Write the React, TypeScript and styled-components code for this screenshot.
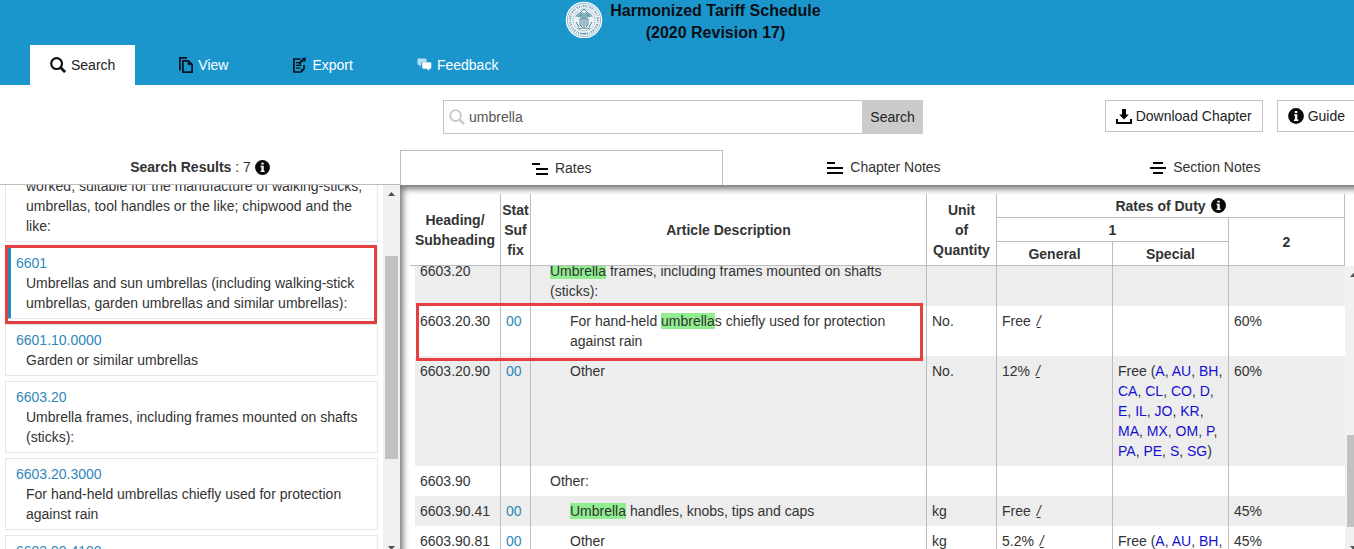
import React, { useLayoutEffect, useRef } from "react";
import styled, { createGlobalStyle, css } from "styled-components";

const BLUE = "#1b96cd";
const RULE = "#bcbcbc";
const LINK = "#2f87bb";
const MARK_RED = "#e43f41";

const GlobalStyle = createGlobalStyle`
  *, *::before, *::after { box-sizing: border-box; }
  html, body, #root { height: 100%; }
  body {
    margin: 0;
    overflow: hidden;
    background: #fff;
    color: #333;
    font-family: "Liberation Sans", Arial, sans-serif;
    font-size: 14px;
    line-height: 20px;
  }
  button, input { font: inherit; }
`;

const Page = styled.div`
  display: flex;
  flex-direction: column;
  width: calc(100% + 12px);
  height: calc(100% + 7px);
`;

const Header = styled.header`
  flex: none;
  background: ${BLUE};
`;

const Brand = styled.div`
  display: flex;
  justify-content: center;
  gap: 7px;
  height: 45px;
  padding: 0 0 0 20px;
`;

const Title = styled.h1`
  margin: 0;
  color: #0b0f14;
  font-size: 16px;
  line-height: 22px;
  text-align: center;
`;

const Nav = styled.nav`
  display: flex;
  gap: 24px;
  padding-left: 30px;
`;

const NavLink = styled.a<{ $active?: boolean }>`
  display: flex;
  align-items: center;
  gap: 5px;
  height: 40px;
  padding: 0 20px;
  color: ${(p) => (p.$active ? "#222" : "#fff")};
  background: ${(p) => (p.$active ? "#fff" : "transparent")};
  text-decoration: none;
`;

const Toolbar = styled.div`
  display: grid;
  grid-template-columns: 1fr auto 1fr;
  flex: none;
  height: 65px;
  padding: 15px 10px 0;
`;

const SearchForm = styled.form`
  display: flex;
  grid-column: 2;
  width: 480px;
  height: 34px;
`;

const SearchField = styled.label`
  display: flex;
  flex: 1;
  align-items: center;
  gap: 4px;
  padding-left: 5px;
  border: 1px solid #c4c4c4;
  border-right: 0;
`;

const SearchInput = styled.input`
  flex: 1;
  min-width: 0;
  padding: 0;
  border: 0;
  outline: 0;
  color: #555;
`;

const SubmitButton = styled.button`
  width: 61px;
  padding: 0;
  border: 0;
  background: #cbcbcb;
  color: #222;
`;

const Actions = styled.div`
  display: flex;
  justify-content: flex-end;
  gap: 14px;
`;

const ActionButton = styled.button`
  display: flex;
  align-items: center;
  gap: 4px;
  height: 32px;
  padding: 0 10px;
  border: 1px solid #c4c4c4;
  background: #fff;
  color: #222;
  white-space: nowrap;
`;

const Columns = styled.div`
  display: flex;
  flex: 1;
  min-height: 0;
`;

const ResultsPanel = styled.aside`
  display: flex;
  flex: none;
  flex-direction: column;
  width: 400px;
`;

const ResultsTitle = styled.h2`
  display: flex;
  flex: none;
  align-items: center;
  justify-content: center;
  gap: 4px;
  height: 35px;
  margin: 0;
  border-bottom: 1px solid ${RULE};
  font-size: 14px;
`;

const Count = styled.span`
  font-weight: normal;
`;

const ScrollArea = styled.div`
  display: flex;
  flex: 1;
  min-height: 0;
`;

const ScrollView = styled.div`
  flex: 1;
  min-width: 0;
  overflow: hidden;
`;

const ResultList = styled.ul`
  margin: 0;
  padding: 0 5px;
  list-style: none;
`;

const ResultCard = styled.li<{ $current?: boolean }>`
  position: relative;
  margin-bottom: 5px;
  padding: 5px 10px;
  border: 1px solid #e6e6e6;
  ${(p) =>
    p.$current &&
    css`
      padding-left: 5px;
      border-left: 6px solid #2488bd;
      &::after {
        content: "";
        position: absolute;
        inset: -3px 0 -6px -6px;
        border: 3px solid ${MARK_RED};
      }
    `}
`;

const ResultCode = styled.a`
  display: block;
  color: ${LINK};
  text-decoration: none;
`;

const ResultText = styled.p`
  margin: 0;
  padding-left: 10px;
`;

const Track = styled.div`
  display: flex;
  flex: none;
  flex-direction: column;
  align-items: center;
  width: 17px;
  background: #f1f1f1;
`;

const Thumb = styled.div<{ $start: number; $size: number }>`
  flex: none;
  width: 13px;
  height: ${(p) => p.$size}px;
  margin-top: ${(p) => p.$start}px;
  margin-bottom: auto;
  background: #c1c1c1;
`;

const Content = styled.main`
  display: flex;
  flex: 1;
  flex-direction: column;
  min-width: 0;
`;

const TabBar = styled.div`
  display: flex;
  flex: none;
  height: 35px;
`;

const Tab = styled.button<{ $active?: boolean }>`
  display: flex;
  flex: 1;
  align-items: center;
  justify-content: center;
  gap: 6px;
  padding: ${(p) => (p.$active ? "0" : "0 0 1px")};
  border: 0 solid ${RULE};
  border-width: ${(p) => (p.$active ? "1px 1px 0" : "0")};
  background: none;
  color: #333;
`;

const TablePanel = styled.section`
  display: flex;
  flex: 1;
  flex-direction: column;
  min-height: 0;
  padding: 8px 4px 0 10px;
  border-top: 1px solid #868686;
  box-shadow: inset 6px 6px 6px -3px #777;
`;

const HeadArea = styled.div`
  flex: none;
  padding-right: 17px;
`;

const BodyArea = styled(ScrollArea)`
  padding-left: 5px;
`;

const Table = styled.table`
  width: 100%;
  border-collapse: separate;
  border-spacing: 0;
  table-layout: fixed;
`;

const Col = styled.col<{ $w?: number }>`
  width: ${(p) => (p.$w ? `${p.$w}px` : "auto")};
`;

const HeadCell = styled.th<{ $plain?: boolean }>`
  height: 24px;
  padding: 0;
  border-bottom: 1px solid ${RULE};
  border-left: ${(p) => (p.$plain ? 0 : 1)}px solid ${RULE};
  &[data-last] {
    border-right: 1px solid ${RULE};
  }
`;

const InfoLabel = styled.span`
  display: flex;
  align-items: center;
  justify-content: center;
  gap: 5px;
`;

const Row = styled.tr<{ $marked?: boolean }>`
  &:nth-child(odd) {
    background: #ededed;
  }
  ${(p) => p.$marked && "position: relative;"}
`;

const RowMark = styled.span`
  position: absolute;
  inset: -3px 422px -5px 1px;
  border: 3px solid ${MARK_RED};
  pointer-events: none;
`;

const Cell = styled.td<{ $first?: boolean; $level?: number }>`
  padding: 5px;
  padding-left: ${(p) => (p.$level ? p.$level * 20 - 1 : 5)}px;
  border-left: ${(p) => (p.$first ? 0 : 1)}px solid ${RULE};
  vertical-align: top;
`;

const Description = styled.div`
  max-width: 340px;
`;

const Suffix = styled.a`
  color: ${LINK};
  text-decoration: none;
`;

const FootnoteLink = styled.a`
  margin-left: 2px;
  color: inherit;
  font-style: italic;
`;

const ProgramLink = styled.a`
  color: #1410d0;
  text-decoration: none;
`;

const Hit = styled.mark`
  background: #90ee90;
  color: inherit;
`;

const Icon = styled.svg`
  display: block;
  flex: none;
`;

function Seal() {
  return (
    <Icon width="38" height="38" viewBox="0 0 38 38">
      <circle cx="19" cy="20" r="18.300" fill="#f6fafc" />
      <circle cx="19" cy="20" r="16.600" fill="none" stroke="#5b93af" strokeWidth=".6" />
      <circle cx="19" cy="20" r="14" fill="none" stroke="#7ea5b9" strokeWidth="2.400" strokeDasharray="1.2 1 .7 1.3 1.6 .9" />
      <circle cx="19" cy="20" r="11.200" fill="#edf4f7" stroke="#8fb4c6" strokeWidth=".7" />
      <path d="M10 18c1-5 5-7 9-5 4-2 8 0 9 5-3-2-5-2-6 1h-6c-1-3-3-3-6-1z" fill="#86adc0" />
      <path d="M15 13l4-4 4 4M13 17l3-2m9 2l-3-2M15 19h8v6l-4 4-4-4zM17 20v6M19 20v8M21 20v6M11 22l3 5m13-5l-3 5M13 28l4 1m8-1l-4 1" fill="none" stroke="#457890" strokeWidth=".9" />
      <path d="M17 33.500h4" stroke="#5d8ba5" strokeWidth="1" />
    </Icon>
  );
}

function Magnifier({ color, weight }: { color: string; weight: number }) {
  return (
    <Icon width="16" height="16" viewBox="0 0 16 16" fill="none" stroke={color} strokeWidth={weight}>
      <circle cx="6.600" cy="6.600" r="5.400" />
      <path d="M10.500 10.500l4.600 4.600" strokeWidth={weight + 0.6} />
    </Icon>
  );
}

function CopyIcon() {
  return (
    <Icon width="14" height="16" viewBox="0 0 14 16" fill="none" stroke="#06131c" strokeWidth="1.700">
      <path d="M.9 13.500V.9H8" />
      <path d="M3.900 3.900h5.400l3.800 3.800v7.400H3.900z" />
      <path d="M9 3.500v4.300h4.300z" fill="#06131c" strokeWidth=".6" />
    </Icon>
  );
}

function ExportIcon() {
  return (
    <Icon width="15" height="16" viewBox="0 0 15 16" fill="none" stroke="#06131c">
      <path d="M8.500 2H1.900v13H9l3-3V8" strokeWidth="1.700" />
      <path d="M4 5.700h3.500M4 8.400h5.500M4 11.200h4.500" strokeWidth="1.200" />
      <path d="M7.500 7.500c.3-2.500 2-3.700 4-4.200" strokeWidth="2.200" />
      <path d="M9.500 1.200L14 .4l-.8 4.900z" fill="#06131c" stroke="none" />
      <path d="M12 12H9v3z" fill="#06131c" stroke="none" />
    </Icon>
  );
}

function ChatIcon() {
  return (
    <Icon width="15" height="14" viewBox="0 0 15 14">
      <path d="M1.500.5h7q1 0 1 1V4H6Q4.300 4 4.300 5.500v1.700L2.500 9V7H1.500q-1 0-1-1V1.500q0-1 1-1z" fill="#b8dcf0" />
      <path d="M6.500 4.300h6.500q1.300 0 1.300 1.300v3.900q0 1.300-1.300 1.300h-.8v2l-2.400-2H6.500q-1.300 0-1.300-1.300V5.600q0-1.300 1.300-1.300z" fill="#fff" />
    </Icon>
  );
}

function DownloadIcon() {
  return (
    <Icon width="16" height="16" viewBox="0 0 16 16" fill="#050505">
      <path d="M6 1h4v5.500h2.800L8 11.500 3.200 6.500H6z" />
      <path d="M0 11h2v3h12v-3h2v5H0z" />
    </Icon>
  );
}

function InfoIcon({ size = 16 }: { size?: number }) {
  return (
    <Icon width={size} height={size} viewBox="0 0 16 16">
      <circle cx="8" cy="8" r="7.900" fill="#0a0a0a" />
      <path d="M6.800 2.900h2.500v2H6.800zM6 6.200h3.300v5.300h1v1.400H5.900v-1.400h1V7.600H6z" fill="#fff" />
    </Icon>
  );
}

const LINE_SHAPES = {
  rates: "M0 3h8M4 8h12M4 13h12",
  chapter: "M0 3h8M0 8h16M0 13h16",
  section: "M3 3h10M0 8h16M3 13h10",
};

function LinesIcon({ kind }: { kind: keyof typeof LINE_SHAPES }) {
  return (
    <Icon width="17" height="14" viewBox="0 0 17 14" stroke="#050505" strokeWidth="2">
      <path d={LINE_SHAPES[kind]} />
    </Icon>
  );
}

function Arrow({ down }: { down?: boolean }) {
  return (
    <Icon width="17" height="17" viewBox="0 0 17 17" fill="#505050">
      <path d={down ? "M5 7h7l-3.500 4z" : "M5 11h7L8.500 7z"} />
    </Icon>
  );
}

function ScrollBar({ start, size }: { start: number; size: number }) {
  return (
    <Track aria-hidden="true">
      <Arrow />
      <Thumb $start={start} $size={size} />
      <Arrow down />
    </Track>
  );
}

function ScrolledView({ top, children }: { top: number; children: React.ReactNode }) {
  const view = useRef<HTMLDivElement>(null);
  useLayoutEffect(() => {
    if (view.current) view.current.scrollTop = top;
  }, [top]);
  return <ScrollView ref={view}>{children}</ScrollView>;
}

const RESULTS = [
  {
    code: "4404",
    text: "worked, suitable for the manufacture of walking-sticks, umbrellas, tool handles or the like; chipwood and the like:",
  },
  {
    code: "6601",
    text: "Umbrellas and sun umbrellas (including walking-stick umbrellas, garden umbrellas and similar umbrellas):",
    current: true,
  },
  { code: "6601.10.0000", text: "Garden or similar umbrellas" },
  { code: "6603.20", text: "Umbrella frames, including frames mounted on shafts (sticks):" },
  { code: "6603.20.3000", text: "For hand-held umbrellas chiefly used for protection against rain" },
  { code: "6603.90.4100", text: "Umbrella handles, knobs, tips and caps" },
];

const PROGRAMS = "A, AU, BH, CA, CL, CO, D, E, IL, JO, KR, MA, MX, OM, P, PA, PE, S, SG".split(", ");

type Rate = {
  code: string;
  suffix?: string;
  level: number;
  text: React.ReactNode;
  unit?: string;
  general?: string;
  special?: boolean;
  other?: string;
  marked?: boolean;
};

const RATES: Rate[] = [
  {
    code: "6603.20",
    level: 1,
    text: (
      <>
        <Hit>Umbrella</Hit> frames, including frames mounted on shafts (sticks):
      </>
    ),
  },
  {
    code: "6603.20.30",
    suffix: "00",
    level: 2,
    text: (
      <>
        For hand-held <Hit>umbrella</Hit>s chiefly used for protection against rain
      </>
    ),
    unit: "No.",
    general: "Free",
    other: "60%",
    marked: true,
  },
  { code: "6603.20.90", suffix: "00", level: 2, text: "Other", unit: "No.", general: "12%", special: true, other: "60%" },
  { code: "6603.90", level: 1, text: "Other:" },
  {
    code: "6603.90.41",
    suffix: "00",
    level: 2,
    text: (
      <>
        <Hit>Umbrella</Hit> handles, knobs, tips and caps
      </>
    ),
    unit: "kg",
    general: "Free",
    other: "45%",
  },
  { code: "6603.90.81", suffix: "00", level: 2, text: "Other", unit: "kg", general: "5.2%", special: true, other: "45%" },
];

function SpecialPrograms() {
  return (
    <>
      Free (
      {PROGRAMS.map((name, i) => (
        <React.Fragment key={name}>
          {i > 0 && ", "}
          <ProgramLink href="#">{name}</ProgramLink>
        </React.Fragment>
      ))}
      )
    </>
  );
}

function TableColumns({ first }: { first: number }) {
  return (
    <colgroup>
      <Col $w={first} />
      <Col $w={30} />
      <Col />
      <Col $w={70} />
      <Col $w={116} />
      <Col $w={116} />
      <Col $w={117} />
    </colgroup>
  );
}

export default function App() {
  return (
    <>
      <GlobalStyle />
      <Page>
        <Header>
          <Brand>
            <Seal />
            <Title>
              Harmonized Tariff Schedule
              <br />
              (2020 Revision 17)
            </Title>
          </Brand>
          <Nav>
            <NavLink href="#" $active>
              <Magnifier color="#111" weight={2.2} />
              Search
            </NavLink>
            <NavLink href="#">
              <CopyIcon />
              View
            </NavLink>
            <NavLink href="#">
              <ExportIcon />
              Export
            </NavLink>
            <NavLink href="#">
              <ChatIcon />
              Feedback
            </NavLink>
          </Nav>
        </Header>

        <Toolbar>
          <SearchForm onSubmit={(e) => e.preventDefault()}>
            <SearchField>
              <Magnifier color="#c8c8c8" weight={1.8} />
              <SearchInput type="text" aria-label="Search" defaultValue="umbrella" />
            </SearchField>
            <SubmitButton type="submit">Search</SubmitButton>
          </SearchForm>
          <Actions>
            <ActionButton type="button">
              <DownloadIcon />
              Download Chapter
            </ActionButton>
            <ActionButton type="button">
              <InfoIcon />
              Guide
            </ActionButton>
          </Actions>
        </Toolbar>

        <Columns>
          <ResultsPanel>
            <ResultsTitle>
              <span>
                Search Results <Count>: 7</Count>
              </span>
              <InfoIcon size={15} />
            </ResultsTitle>
            <ScrollArea>
              <ScrolledView top={35}>
                <ResultList>
                  {RESULTS.map((r) => (
                    <ResultCard key={r.code} $current={r.current}>
                      <ResultCode href="#">{r.code}</ResultCode>
                      <ResultText>{r.text}</ResultText>
                    </ResultCard>
                  ))}
                </ResultList>
              </ScrolledView>
              <ScrollBar start={54} size={203} />
            </ScrollArea>
          </ResultsPanel>

          <Content>
            <TabBar>
              <Tab type="button" $active>
                <LinesIcon kind="rates" />
                Rates
              </Tab>
              <Tab type="button">
                <LinesIcon kind="chapter" />
                Chapter Notes
              </Tab>
              <Tab type="button">
                <LinesIcon kind="section" />
                Section Notes
              </Tab>
            </TabBar>
            <TablePanel>
              <HeadArea>
                <Table>
                  <TableColumns first={90} />
                  <thead>
                    <tr>
                      <HeadCell rowSpan={3} $plain>
                        Heading/
                        <br />
                        Subheading
                      </HeadCell>
                      <HeadCell rowSpan={3}>
                        Stat
                        <br />
                        Suf
                        <br />
                        fix
                      </HeadCell>
                      <HeadCell rowSpan={3}>Article Description</HeadCell>
                      <HeadCell rowSpan={3}>
                        Unit
                        <br />
                        of
                        <br />
                        Quantity
                      </HeadCell>
                      <HeadCell colSpan={3} data-last>
                        <InfoLabel>
                          Rates of Duty
                          <InfoIcon size={15} />
                        </InfoLabel>
                      </HeadCell>
                    </tr>
                    <tr>
                      <HeadCell colSpan={2}>1</HeadCell>
                      <HeadCell rowSpan={2} data-last>
                        2
                      </HeadCell>
                    </tr>
                    <tr>
                      <HeadCell>General</HeadCell>
                      <HeadCell>Special</HeadCell>
                    </tr>
                  </thead>
                </Table>
              </HeadArea>
              <BodyArea>
                <ScrolledView top={10}>
                  <Table>
                    <TableColumns first={85} />
                    <tbody>
                      {RATES.map((r) => (
                        <Row key={r.code} $marked={r.marked}>
                          <Cell $first>
                            {r.code}
                            {r.marked && <RowMark />}
                          </Cell>
                          <Cell>{r.suffix && <Suffix href="#">{r.suffix}</Suffix>}</Cell>
                          <Cell $level={r.level}>
                            <Description>{r.text}</Description>
                          </Cell>
                          <Cell>{r.unit}</Cell>
                          <Cell>
                            {r.general && (
                              <>
                                {r.general} <FootnoteLink href="#">/</FootnoteLink>
                              </>
                            )}
                          </Cell>
                          <Cell>{r.special && <SpecialPrograms />}</Cell>
                          <Cell>{r.other}</Cell>
                        </Row>
                      ))}
                    </tbody>
                  </Table>
                </ScrolledView>
                <ScrollBar start={152} size={92} />
              </BodyArea>
            </TablePanel>
          </Content>
        </Columns>
      </Page>
    </>
  );
}
